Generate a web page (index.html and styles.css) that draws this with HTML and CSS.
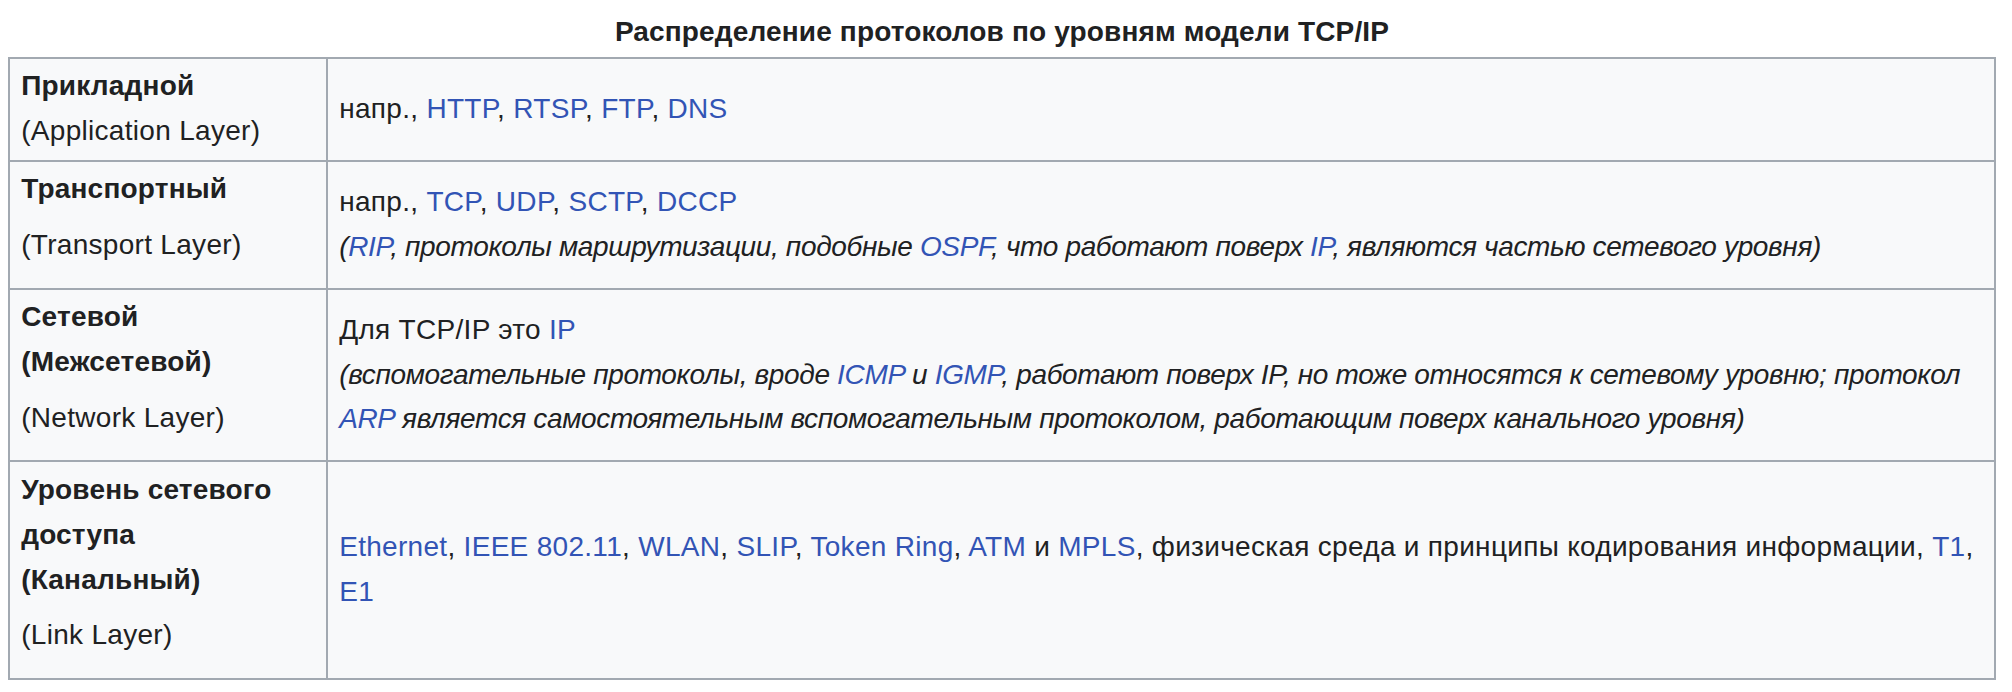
FILE: index.html
```html
<!DOCTYPE html>
<html lang="ru">
<head>
<meta charset="utf-8">
<title>Распределение протоколов по уровням модели TCP/IP</title>
<link rel="stylesheet" href="styles.css">
</head>
<body>
<table class="wikitable">
<caption>Распределение протоколов по уровням модели TCP/IP</caption>
<tbody>
<tr>
<td class="layer"><b>Прикладной</b><br>(Application Layer)</td>
<td class="protos">напр., <a href="#">HTTP</a>, <a href="#">RTSP</a>, <a href="#">FTP</a>, <a href="#">DNS</a></td>
</tr>
<tr>
<td class="layer"><b>Транспортный</b><p>(Transport Layer)</p></td>
<td class="protos">напр., <a href="#">TCP</a>, <a href="#">UDP</a>, <a href="#">SCTP</a>, <a href="#">DCCP</a><br><i>(<a href="#">RIP</a>, протоколы маршрутизации, подобные <a href="#">OSPF</a>, что работают поверх <a href="#">IP</a>, являются частью сетевого уровня)</i></td>
</tr>
<tr>
<td class="layer"><b>Сетевой (Межсетевой)</b><p>(Network Layer)</p></td>
<td class="protos">Для TCP/IP это <a href="#">IP</a><br><i>(вспомогательные протоколы, вроде <a href="#">ICMP</a> и <a href="#">IGMP</a>, работают поверх IP, но тоже относятся к сетевому уровню; протокол <a href="#">ARP</a> является самостоятельным вспомогательным протоколом, работающим поверх канального уровня)</i></td>
</tr>
<tr>
<td class="layer"><b>Уровень сетевого доступа (Канальный)</b><p>(Link Layer)</p></td>
<td class="protos"><a href="#">Ethernet</a>, <a href="#">IEEE 802.11</a>, <a href="#">WLAN</a>, <a href="#">SLIP</a>, <a href="#">Token Ring</a>, <a href="#">ATM</a> и <a href="#">MPLS</a>, физическая среда и принципы кодирования информации, <a href="#">T1</a>, <a href="#">E1</a></td>
</tr>
</tbody>
</table>
</body>
</html>
```

FILE: styles.css
```css
html, body {
  margin: 0;
  padding: 0;
  background: #ffffff;
}

body {
  font-family: "Liberation Sans", Arial, Helvetica, sans-serif;
  font-size: 28px;
  line-height: 1.6;
  color: #202122;
  padding: 10px 0 0 8px;
}

.wikitable {
  border-collapse: collapse;
  background: #f8f9fa;
  color: #202122;
  border: 2px solid #a2a9b1;
  width: 1988px;
}

.wikitable caption {
  font-weight: bold;
  text-align: center;
  padding-bottom: 2px;
  letter-spacing: 0.15px;
}

.wikitable td {
  border: 2px solid #a2a9b1;
  padding: 5.6px 11.2px;
  vertical-align: middle;
  text-align: left;
  letter-spacing: 0.3px;
}

.wikitable td b {
  letter-spacing: 0.2px;
}

.wikitable td i {
  letter-spacing: -0.35px;
}

.wikitable td.layer {
  width: 293.6px;
}

.wikitable p {
  margin: 11.2px 0 14px 0;
}

.wikitable a {
  color: #3254b5;
  text-decoration: none;
}
```
